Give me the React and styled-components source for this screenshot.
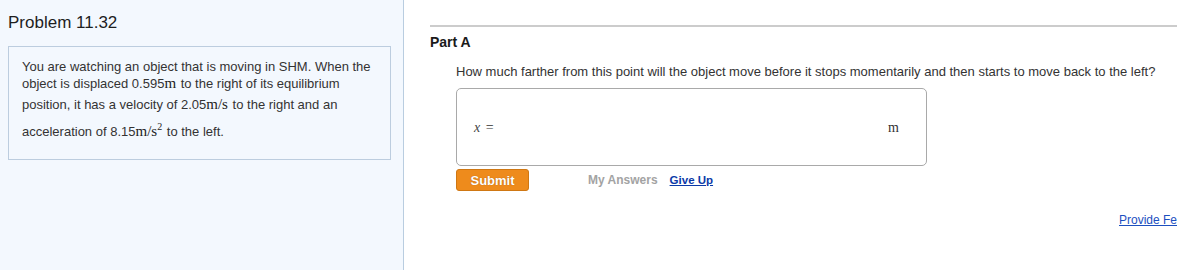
import React from "react";
import styled, { createGlobalStyle } from "styled-components";

const Global = createGlobalStyle`
  html, body { margin: 0; padding: 0; overflow: hidden; background: #fff; }
  body { font-family: Arial, "Liberation Sans", sans-serif; }
`;

const Page = styled.div`
  display: flex;
  width: 1240px;
  height: 270px;
`;

const Sidebar = styled.aside`
  width: 404px;
  flex: none;
  background: #f3f8fe;
  border-right: 1px solid #b9cde0;
  padding: 13px 0 0 8px;
  box-sizing: border-box;
`;

const Title = styled.h2`
  margin: 0;
  font-size: 17px;
  font-weight: normal;
  color: #1e1e1e;
  line-height: 20px;
`;

const ProblemBox = styled.div`
  margin-top: 13px;
  width: 383px;
  height: 114px;
  box-sizing: border-box;
  border: 1px solid #bccddf;
  padding: 12px 0 0 13px;
`;

const Line = styled.div`
  font-size: 13px;
  color: #333;
  line-height: 16px;
  margin-top: ${(p) => p.$gap || 0}px;
  white-space: nowrap;
`;

const M = styled.span`
  font-family: "Liberation Serif", "Times New Roman", serif;
  font-size: 15px;
  color: #222;
  margin: 0 1px 0 0;
`;

const Sup = styled.sup`
  font-size: 10px;
  line-height: 0;
  vertical-align: 6px;
`;

const Main = styled.main`
  flex: 1;
  padding: 25px 0 0 26px;
  display: flex;
  flex-direction: column;
`;

const Rule = styled.div`
  height: 2px;
  background: #cccccc;
`;

const PartTitle = styled.h3`
  margin: 7px 0 0;
  font-size: 14px;
  font-weight: bold;
  color: #1a1a1a;
  line-height: 16px;
`;

const Question = styled.div`
  padding-left: 26px;
  margin-top: 14px;
`;

const Prompt = styled.p`
  margin: 0;
  font-size: 13px;
  color: #333;
  line-height: 15px;
`;

const AnswerBox = styled.div`
  margin-top: 9px;
  width: 471px;
  height: 78px;
  box-sizing: border-box;
  border: 1px solid #a9a9a9;
  border-radius: 5px;
  display: flex;
  align-items: center;
  justify-content: space-between;
  padding: 0 27px 0 17px;
  background: #fff;
`;

const Var = styled.span`
  font-family: "Liberation Serif", "Times New Roman", serif;
  font-size: 14px;
  color: #333;
  padding-top: 2px;
  & i { font-size: 14px; color: #444; margin-right: 2px; }
`;

const Unit = styled.span`
  font-family: "Liberation Serif", "Times New Roman", serif;
  font-size: 14px;
  color: #333;
  padding-top: 2px;
`;

const Actions = styled.div`
  display: flex;
  align-items: center;
  height: 22px;
  margin-top: 3px;
`;

const SubmitButton = styled.button`
  width: 73px;
  height: 22px;
  box-sizing: border-box;
  background: #ee8b1c;
  border: 1px solid #cf7713;
  border-radius: 3px;
  color: #fff;
  font-family: Arial, "Liberation Sans", sans-serif;
  font-weight: bold;
  font-size: 13px;
  text-shadow: 0 0 1px rgba(120, 60, 0, 0.6);
  padding: 0;
`;

const MyAnswers = styled.span`
  margin-left: 59px;
  font-size: 12px;
  font-weight: bold;
  color: #a3a3a3;
`;

const LinkBtn = styled.a`
  margin-left: 12px;
  font-size: 11.5px;
  font-weight: bold;
  color: #0b3aa8;
  text-decoration: underline;
`;

const FeedbackRow = styled.div`
  display: flex;
  padding-left: 689px;
  margin-top: 22px;
`;

const Feedback = styled.a`
  font-size: 12px;
  line-height: 14px;
  color: #1c4fbf;
  text-decoration: underline;
  white-space: nowrap;
`;

export default function App() {
  return (
    <>
      <Global />
      <Page>
        <Sidebar>
          <Title>Problem 11.32</Title>
          <ProblemBox>
            <Line>You are watching an object that is moving in SHM. When the</Line>
            <Line>
              object is displaced 0.595<M>m</M> to the right of its equilibrium
            </Line>
            <Line $gap={4}>
              position, it has a velocity of 2.05<M>m/s</M> to the right and an
            </Line>
            <Line $gap={10}>
              acceleration of 8.15<M>m/s<Sup>2</Sup></M> to the left.
            </Line>
          </ProblemBox>
        </Sidebar>
        <Main>
          <Rule />
          <PartTitle>Part A</PartTitle>
          <Question>
            <Prompt>
              How much farther from this point will the object move before it stops momentarily and then starts to move back to the left?
            </Prompt>
            <AnswerBox>
              <Var>
                <i>x</i> =
              </Var>
              <Unit>m</Unit>
            </AnswerBox>
            <Actions>
              <SubmitButton>Submit</SubmitButton>
              <MyAnswers>My Answers</MyAnswers>
              <LinkBtn href="#">Give Up</LinkBtn>
            </Actions>
          </Question>
          <FeedbackRow>
            <Feedback href="#">Provide Feedback</Feedback>
          </FeedbackRow>
        </Main>
      </Page>
    </>
  );
}
